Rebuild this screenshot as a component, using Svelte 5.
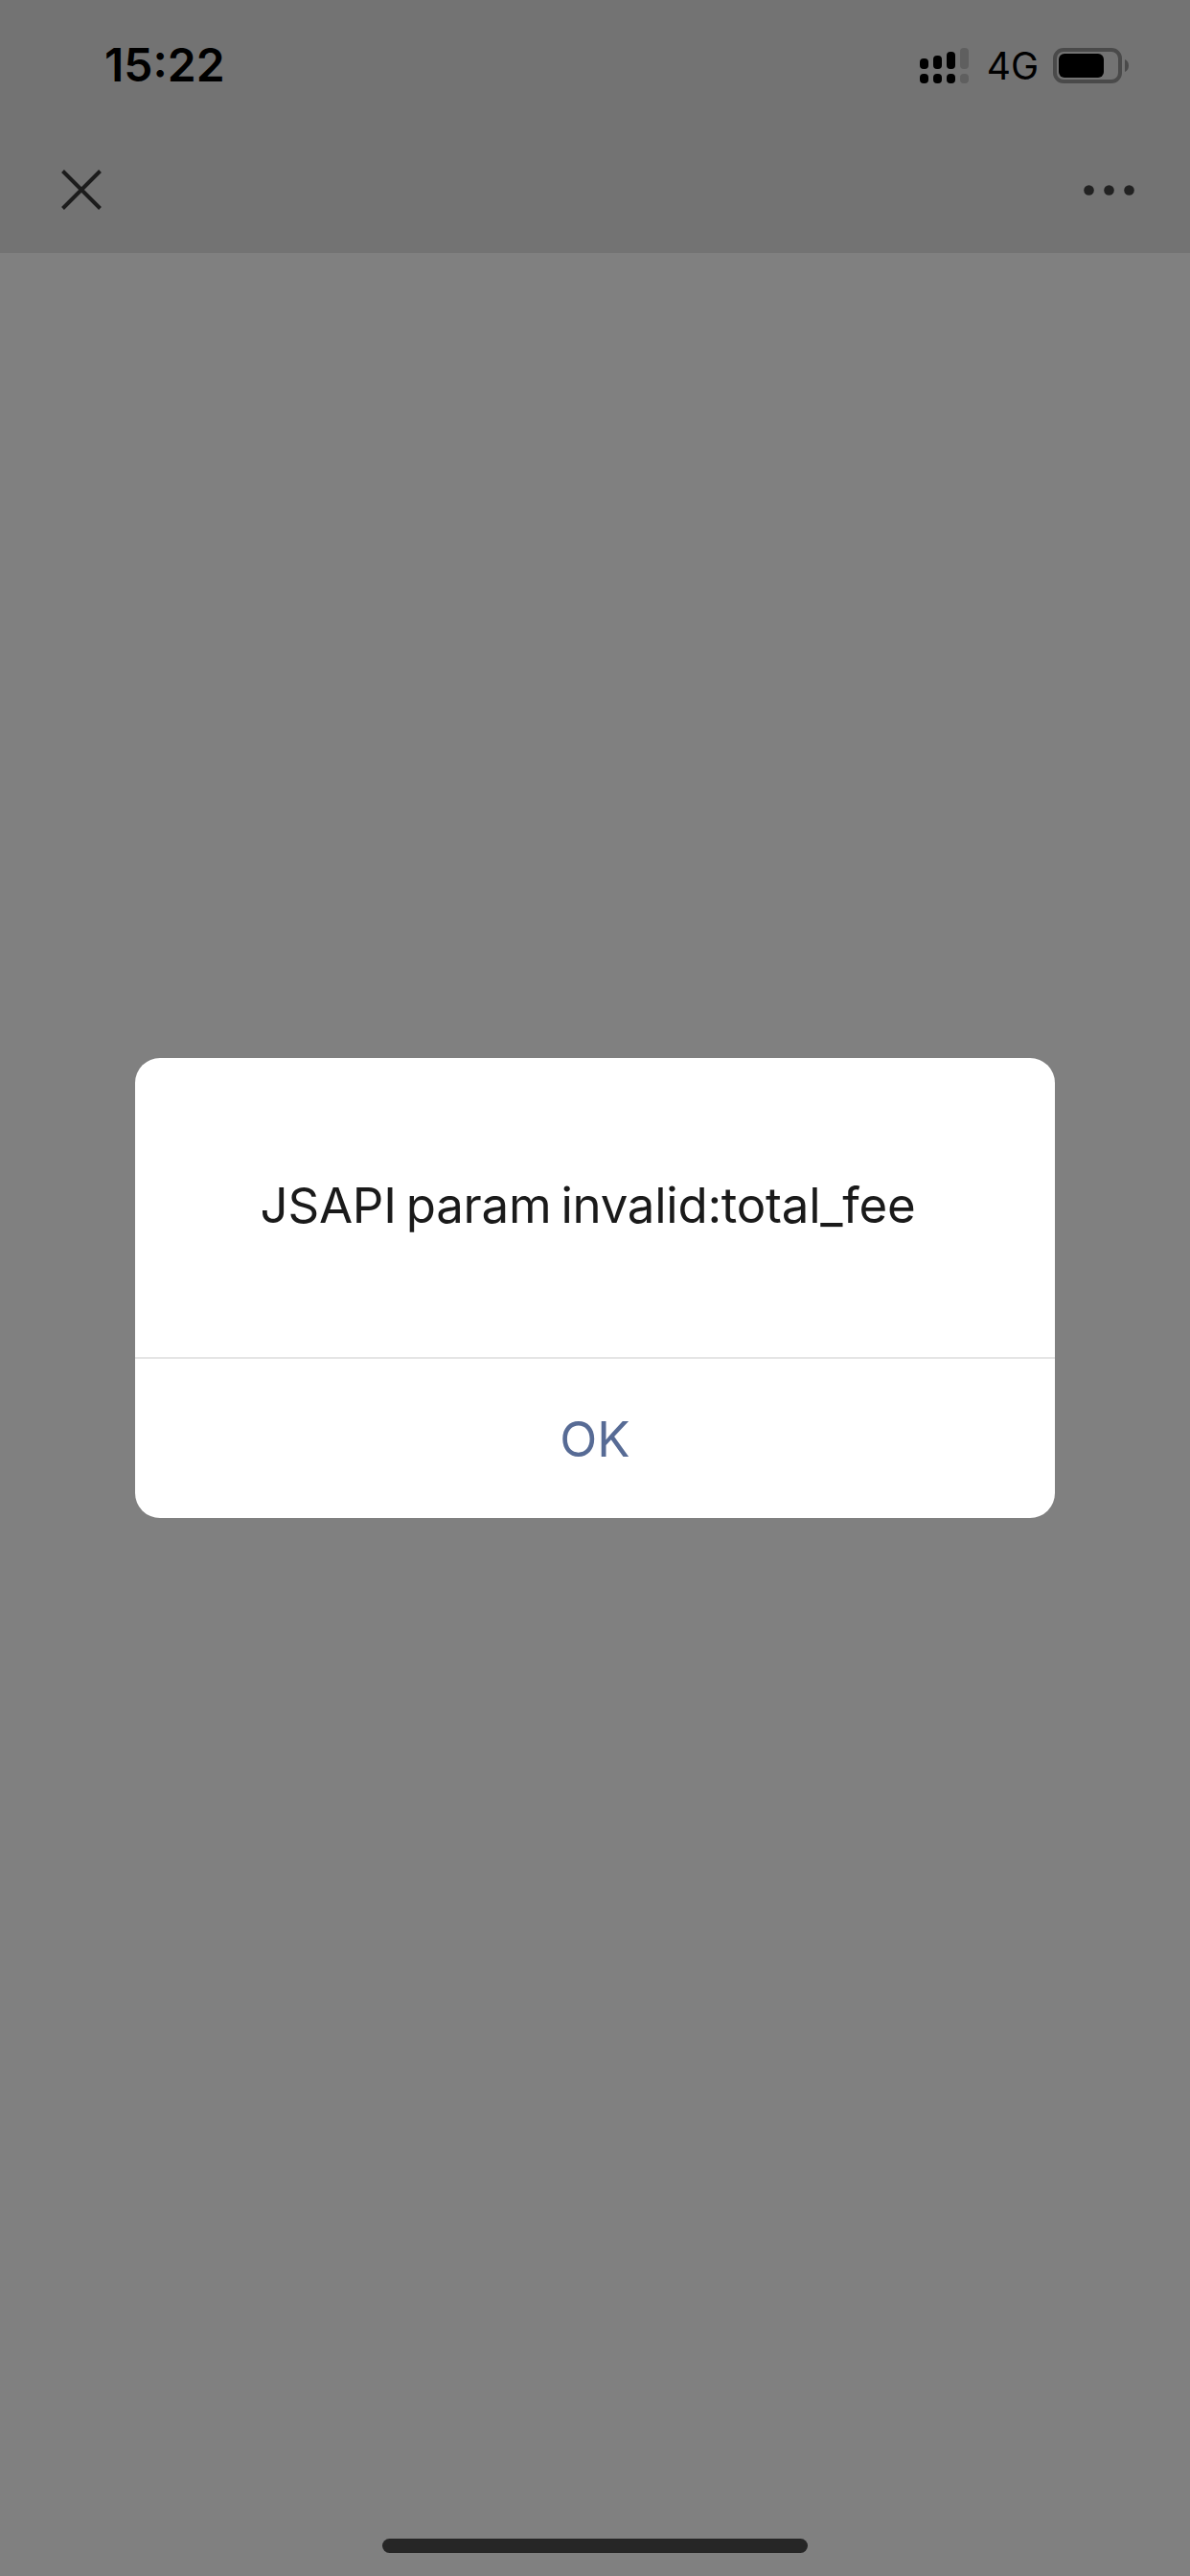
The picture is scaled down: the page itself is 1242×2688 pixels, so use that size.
<script>
  const title = 'JSAPI param invalid:total_fee';
  const signalBars = [
    { x: 0, y: 11, h: 11, fill: '#000' },
    { x: 14, y: 8, h: 14, fill: '#000' },
    { x: 28, y: 4, h: 18, fill: '#000' },
    { x: 42, y: 0, h: 22, fill: '#5f5f5f' }
  ];
</script>

<div class="page">
  <header class="top">
    <div class="status">
      <span class="time">15:22</span>
      <div class="status-right">
        <svg class="signal" width="51" height="37" viewBox="0 0 51 37">
          {#each signalBars as bar}
            <rect x={bar.x} y={bar.y} width="9" height={bar.h} rx="4" fill={bar.fill} />
            <rect x={bar.x} y="27" width="9" height="10" rx="4" fill={bar.fill} />
          {/each}
        </svg>
        <span class="net">4G</span>
        <svg class="battery" width="79" height="37" viewBox="0 0 79 37">
          <rect x="2" y="2" width="68" height="33" rx="9" fill="none" stroke="#4a4a4a" stroke-width="4" />
          <rect x="6" y="6" width="47" height="25" rx="6" fill="#000" />
          <path d="M75 12c2.500 1 4 3.500 4 6.500s-1.500 5.500-4 6.500z" fill="#4a4a4a" />
        </svg>
      </div>
    </div>
    <nav class="nav">
      <svg width="42" height="42" viewBox="0 0 42 42">
        <path d="M1.500 1.500l39 39M40.500 1.500l-39 39" stroke="#1c1c1c" stroke-width="4" fill="none" />
      </svg>
      <svg width="53" height="11" viewBox="0 0 53 11">
        <circle cx="5.500" cy="5.500" r="5.300" fill="#222" />
        <circle cx="26.500" cy="5.500" r="5.300" fill="#222" />
        <circle cx="47.500" cy="5.500" r="5.300" fill="#222" />
      </svg>
    </nav>
  </header>

  <div class="home-bar"></div>

  <div class="mask">
    <div class="dialog">
      <div class="dialog-body">{title}</div>
      <button class="dialog-btn">OK</button>
    </div>
  </div>
</div>

<style>
  :global(body) {
    margin: 0;
    background: #808080;
  }

  .page {
    position: relative;
    display: flex;
    flex-direction: column;
    justify-content: space-between;
    height: 2688px;
    background: #808080;
    font-family: Inter, "Liberation Sans", sans-serif;
  }

  .top {
    height: 264px;
    background: #737373;
  }

  .status {
    display: flex;
    justify-content: space-between;
    align-items: center;
    height: 136px;
    padding: 0 64px 0 109px;
    box-sizing: border-box;
  }

  .time {
    font-size: 48px;
    font-weight: 600;
    color: #000;
    line-height: 1;
  }

  .status-right {
    display: flex;
    align-items: center;
  }

  .net {
    margin: 0 15px 0 19px;
    font-size: 39px;
    color: #000;
    line-height: 1;
  }

  .nav {
    display: flex;
    justify-content: space-between;
    align-items: center;
    padding: 0 58px 0 64px;
    margin-top: 41px;
  }

  .home-bar {
    align-self: center;
    width: 444px;
    height: 15px;
    margin-bottom: 24px;
    border-radius: 8px;
    background: #262626;
  }

  .mask {
    position: absolute;
    inset: 0;
    display: flex;
    align-items: center;
    justify-content: center;
  }

  .dialog {
    width: 960px;
    height: 480px;
    display: flex;
    flex-direction: column;
    background: #fff;
    border-radius: 26px;
    overflow: hidden;
  }

  .dialog-body {
    display: flex;
    flex: 1;
    align-items: center;
    justify-content: center;
    padding: 0 15px 6px 0;
    border-bottom: 2px solid #e5e5e5;
    font-size: 51px;
    letter-spacing: -0.25px;
    word-spacing: -4px;
    color: #1a1a1a;
  }

  .dialog-btn {
    height: 166px;
    border: 0;
    padding: 0;
    background: none;
    font-family: inherit;
    font-size: 51px;
    color: #576b95;
  }
</style>
